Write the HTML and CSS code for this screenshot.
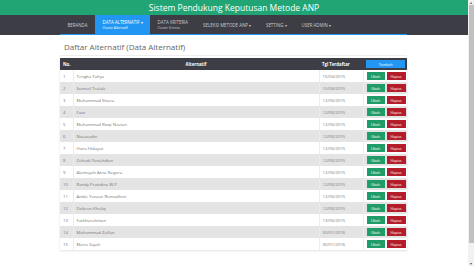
FILE: index.html
```html
<!DOCTYPE html>
<html lang="id">
<head>
    <meta charset="UTF-8">
    <title>Daftar Alternatif - SPK ANP</title>
    <link rel="stylesheet" href="styles.css">
</head>
<body>
    <div class="page">
        <!-- Header -->
        <header class="topbar">Sistem Pendukung Keputusan Metode ANP</header>

        <!-- Menu -->
        <nav class="menu">
            <ul class="menu-list">
                <li><a href="#">BERANDA</a></li>
                <li class="active"><a href="#">DATA ALTERNATIF &#9662;<span class="sub">Cluster Alternatif</span></a></li>
                <li><a href="#">DATA KRITERIA<span class="sub">Cluster Kriteria</span></a></li>
                <li><a href="#">SELEKSI METODE ANP &#9662;</a></li>
                <li><a href="#">SETTING &#9662;</a></li>
                <li><a href="#">USER ADMIN &#9662;</a></li>
            </ul>
        </nav>

        <!-- Content -->
        <div class="content">
            <h2 class="page-title">Daftar Alternatif (Data Alternatif)</h2>

            <table class="data-table">
                <colgroup>
                    <col class="w-no">
                    <col>
                    <col class="w-date">
                    <col class="w-act">
                </colgroup>
                <thead>
                    <tr>
                        <th>No.</th>
                        <th class="col-name">Alternatif</th>
                        <th>Tgl Terdaftar</th>
                        <th class="col-act"><button class="btn btn-add">Tambah</button></th>
                    </tr>
                </thead>
                <tbody id="rows"></tbody>
            </table>
        </div>
    </div>

    <!-- scrollbar of the captured window -->
    <div class="scrollbar">
        <span class="arrow">&#9652;</span>
        <div class="thumb"></div>
        <span class="arrow">&#9662;</span>
    </div>

    <script>
        var data = [
            ["Tengku Yahya", "15/04/2015"],
            ["Samsol Tralala", "15/04/2015"],
            ["Muhammad Shava", "12/06/2015"],
            ["Fazz", "12/06/2015"],
            ["Muhammad Rizqi Novian", "12/06/2015"],
            ["Nasarudin", "12/06/2015"],
            ["Hans Hidayat", "12/06/2015"],
            ["Zuhudi Yanuhdian", "12/06/2015"],
            ["Alamsyah Atria Negara", "12/06/2015"],
            ["Randy Pratidina W.P", "12/06/2015"],
            ["Andie Yanuar Romadhon", "12/06/2015"],
            ["Dzikron Kholiq", "12/06/2015"],
            ["Fatkhurohman", "13/06/2015"],
            ["Muhammad Zulfan", "30/01/2016"],
            ["Mario Sajah", "30/01/2016"]
        ];

        var tbody = document.getElementById("rows");
        data.forEach(function(item, i) {
            var tr = document.createElement("tr");
            tr.innerHTML = '<td>' + (i + 1) + '</td>' +
                '<td>' + item[0] + '</td>' +
                '<td>' + item[1] + '</td>' +
                '<td class="col-act"><button class="btn btn-edit">Ubah</button>' +
                '<button class="btn btn-del">Hapus</button></td>';
            tbody.appendChild(tr);
        });
    </script>
</body>
</html>
```

FILE: styles.css
```css
/* Page */
html, body {
    margin: 0;
    padding: 0;
    height: 266px;
    overflow: hidden;
}

body {
    display: flex;
    font-family: "Open Sans", Arial, sans-serif;
    background-color: #fff;
    color: #666;
}

.page {
    flex: 1;
    min-width: 0;
}

/* Header */
.topbar {
    height: 15px;
    line-height: 15px;
    background-color: #22a574;
    color: #fff;
    text-align: center;
    font-size: 8.5px;
}

/* Menu */
.menu {
    height: 20px;
    background-color: #3c3d45;
}

.menu-list {
    display: flex;
    margin: 0 0 0 60px;
    padding: 0;
    width: 347px;
    height: 19px;
    border-bottom: 1px solid #2196f3;
    list-style: none;
}

.menu-list li {
    display: flex;
}

.menu-list a {
    display: flex;
    flex-direction: column;
    justify-content: center;
    padding: 0 7.5px;
    color: #c9cacf;
    font-size: 4.4px;
    text-decoration: none;
    white-space: nowrap;
}

.menu-list li.active a {
    background-color: #2196f3;
    color: #fff;
}

.menu-list .sub {
    font-size: 3.2px;
    margin-top: 1px;
}

/* Content */
.content {
    margin-left: 60px;
    width: 347px;
}

.page-title {
    margin: 0 0 2px;
    padding: 6px 0 3px 4px;
    border-bottom: 1px solid #eee;
    font-size: 8px;
    line-height: 11px;
    font-weight: normal;
    color: #666;
}

/* Table */
.data-table {
    width: 100%;
    table-layout: fixed;
    border-collapse: collapse;
    font-size: 4.3px;
    box-shadow: 0 1px 2px rgba(0, 0, 0, 0.12);
}

.w-no {
    width: 13px;
}

.w-date {
    width: 44px;
}

.w-act {
    width: 44px;
}

.data-table th {
    height: 12px;
    padding: 0 3px;
    background-color: #3c3d45;
    color: #fff;
    font-weight: bold;
    text-align: left;
    white-space: nowrap;
}

.data-table td {
    height: 12px;
    padding: 0 3px;
    color: #777;
    white-space: nowrap;
}

.data-table tbody tr:nth-child(even) td {
    background-color: #e4e4e4;
}

.data-table td + td {
    border-left: 1px solid #ececec;
}

.data-table th.col-name {
    text-align: center;
}

.data-table .col-act {
    padding: 0 2px 0 3px;
}

/* Buttons */
.btn {
    height: 8px;
    padding: 0;
    border: none;
    border-radius: 0;
    color: #fff;
    font-family: "Open Sans", Arial, sans-serif;
    font-size: 3.6px;
    vertical-align: middle;
}

.btn-add {
    width: 39px;
    background-color: #2196f3;
}

.btn-edit {
    width: 18px;
    margin-right: 2px;
    background-color: #1f9d68;
}

.btn-del {
    width: 19px;
    background-color: #b41d27;
}

/* Scrollbar */
.scrollbar {
    width: 6px;
    display: flex;
    flex-direction: column;
    align-items: center;
    background-color: #f1f1f1;
}

.scrollbar .arrow {
    font-size: 4px;
    line-height: 5px;
    color: #555;
}

.thumb {
    width: 5px;
    height: 238px;
    background-color: #c1c1c1;
}

.scrollbar .arrow:last-child {
    margin-top: auto;
}
```
